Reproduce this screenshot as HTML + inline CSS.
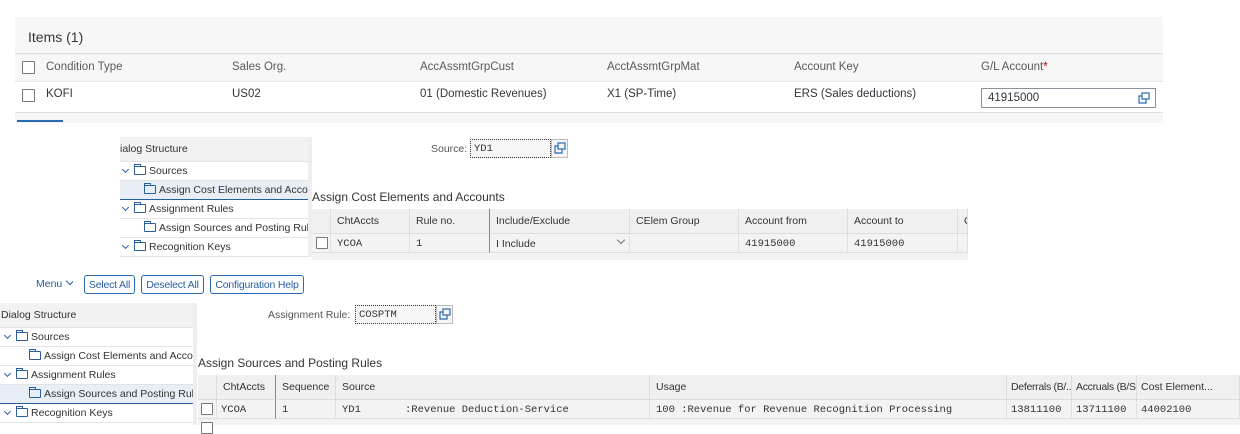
<!DOCTYPE html>
<html><head><meta charset="utf-8"><style>
*{box-sizing:border-box;margin:0;padding:0}
body{width:1240px;height:425px;background:#fff;position:relative;overflow:hidden;font-family:"Liberation Sans",sans-serif;color:#32363a}
.a{position:absolute;white-space:nowrap;overflow:hidden}
.t{font-size:10.5px;color:#333}
.m{font-family:"Liberation Mono",monospace;font-size:10.5px;color:#333}
.cb{position:absolute;width:12px;height:12px;border:1px solid #777;background:#fff;border-radius:1px}
.th{position:absolute;background:#f0f0f0;border-right:1px solid #ddd;border-bottom:1px solid #ddd;font-size:10.5px;color:#333;padding:6px 0 0 6px;white-space:nowrap;overflow:hidden}
.td{position:absolute;background:#f3f3f3;border-right:1px solid #e0e0e0;border-bottom:1px solid #ddd;font-size:10.5px;color:#333;padding:4px 0 0 6px;white-space:nowrap;overflow:hidden}
.ds{position:absolute;border-bottom:1px solid #e3e3e3;font-size:10.5px;color:#333;white-space:nowrap;overflow:hidden;background:#fff}
.fold{display:inline-block;width:12px;height:9px;border:1px solid #2a5d9f;border-radius:1px;vertical-align:-1px;margin-right:3px;position:relative}
.fold:before{content:"";position:absolute;left:-1px;top:-3px;width:5px;height:2px;border:1px solid #2a5d9f;border-bottom:none}
.chev{display:inline-block;width:5px;height:5px;border-right:1.3px solid #2a5d9f;border-bottom:1.3px solid #2a5d9f;transform:rotate(45deg);margin:0 6px 2px 3px}
.btn{position:absolute;border:1px solid #2a6ab0;border-radius:3px;font-size:10.5px;letter-spacing:-0.2px;color:#2a5d9f;background:#fff;padding:3px 0 0 0;height:19px;white-space:nowrap;text-align:center;overflow:hidden}
.vh{position:absolute;width:14px;height:12px}
</style></head><body>

<div class="a" style="left:15px;top:17px;width:1148px;height:106px;background:#f7f7f7"></div>
<div class="a" style="left:28px;top:29px;font-size:14px;color:#32363a">Items (1)</div>
<div class="a" style="left:15px;top:53px;width:1148px;height:1px;background:#e0e0e0"></div>
<div class="a" style="left:15px;top:81px;width:1148px;height:32px;background:#fff;border-top:1px solid #e5e5e5;border-bottom:1px solid #e0e0e0"></div>
<div class="cb" style="left:22px;top:61px;width:13px;height:13px"></div>
<div class="cb" style="left:22px;top:89px;width:13px;height:13px"></div>
<div class="a" style="left:46px;top:61px;font-size:11.5px;color:#5a5a5a">Condition Type</div>
<div class="a" style="left:232px;top:61px;font-size:11.5px;color:#5a5a5a">Sales Org.</div>
<div class="a" style="left:420px;top:61px;font-size:11.5px;color:#5a5a5a">AccAssmtGrpCust</div>
<div class="a" style="left:607px;top:61px;font-size:11.5px;color:#5a5a5a">AcctAssmtGrpMat</div>
<div class="a" style="left:794px;top:61px;font-size:11.5px;color:#5a5a5a">Account Key</div>
<div class="a" style="left:981px;top:61px;font-size:11.5px;color:#5a5a5a">G/L Account<span style="color:#b00">*</span></div>
<div class="a" style="left:46px;top:88px;font-size:11.5px">KOFI</div>
<div class="a" style="left:232px;top:88px;font-size:11.5px">US02</div>
<div class="a" style="left:420px;top:88px;font-size:11.5px">01 (Domestic Revenues)</div>
<div class="a" style="left:607px;top:88px;font-size:11.5px">X1 (SP-Time)</div>
<div class="a" style="left:794px;top:88px;font-size:11.5px">ERS (Sales deductions)</div>
<div class="a" style="left:981px;top:88px;width:175px;height:20px;border:1px solid #89919a;background:#fff;font-size:11.5px;padding:3px 0 0 6px">41915000</div>
<svg class="vh" style="left:1137px;top:92px" viewBox="0 0 14 12"><rect x="5" y="1" width="7" height="6" fill="none" stroke="#2a6ab0" stroke-width="1.2"/><path d="M5 4H2v7h7V7" fill="none" stroke="#2a6ab0" stroke-width="1.2"/></svg>
<div class="a" style="left:17px;top:120px;width:46px;height:2px;background:#2a6ab0"></div>

<div class="ds" style="left:120px;top:137px;width:190px;height:25px;background:#f2f2f2;padding:6px 0 0 0">ialog Structure</div>
<div class="ds" style="left:120px;top:162px;width:190px;height:19px;padding:3px 0 0 0"><span class="chev"></span><span class="fold"></span>Sources</div>
<div class="ds" style="left:120px;top:181px;width:190px;height:19px;padding:3px 0 0 24px;background:#e7eef6;border-bottom:1px solid #2a5d9f"><span class="fold"></span>Assign Cost Elements and Accounts</div>
<div class="ds" style="left:120px;top:200px;width:190px;height:19px;padding:3px 0 0 0"><span class="chev"></span><span class="fold"></span>Assignment Rules</div>
<div class="ds" style="left:120px;top:219px;width:190px;height:19px;padding:3px 0 0 24px"><span class="fold"></span>Assign Sources and Posting Rules</div>
<div class="ds" style="left:120px;top:238px;width:190px;height:19px;padding:3px 0 0 0"><span class="chev"></span><span class="fold"></span>Recognition Keys</div>
<div class="a" style="left:308px;top:137px;width:4px;height:120px;background:#eee"></div>

<div class="a t" style="left:431px;top:143px;color:#555">Source:</div>
<div class="a m" style="left:470px;top:139px;width:81px;height:19px;border:1px dotted #333;background:#f6f6f6;padding:3px 0 0 3px">YD1</div>
<div class="a" style="left:551px;top:139px;width:17px;height:19px;border:1px solid #bbb;background:#f5f5f5"></div>
<svg class="vh" style="left:553px;top:142px" viewBox="0 0 14 12"><rect x="5" y="1" width="7" height="6" fill="none" stroke="#2a6ab0" stroke-width="1.2"/><path d="M5 4H2v7h7V7" fill="none" stroke="#2a6ab0" stroke-width="1.2"/></svg>

<div class="a" style="left:312px;top:190px;font-size:12px;color:#333">Assign Cost Elements and Accounts</div>
<div class="th" style="left:312px;top:209px;width:19px;height:25px"></div>
<div class="th" style="left:331px;top:209px;width:79px;height:25px">ChtAccts</div>
<div class="th" style="left:410px;top:209px;width:80px;height:25px;border-right:1px solid #888">Rule no.</div>
<div class="th" style="left:490px;top:209px;width:140px;height:25px">Include/Exclude</div>
<div class="th" style="left:630px;top:209px;width:109px;height:25px">CElem Group</div>
<div class="th" style="left:739px;top:209px;width:109px;height:25px">Account from</div>
<div class="th" style="left:848px;top:209px;width:110px;height:25px">Account to</div>
<div class="th" style="left:958px;top:209px;width:10px;height:25px">C</div>
<div class="td" style="left:312px;top:234px;width:19px;height:19px"></div><div class="cb" style="left:316px;top:237px"></div>
<div class="td m" style="left:331px;top:234px;width:79px;height:19px">YCOA</div>
<div class="td m" style="left:410px;top:234px;width:80px;height:19px;border-right:1px solid #888">1</div>
<div class="td" style="left:490px;top:234px;width:140px;height:19px">I Include<span style="position:absolute;left:128px;top:3px;width:6px;height:6px;border-right:1px solid #777;border-bottom:1px solid #777;transform:rotate(45deg)"></span></div>
<div class="td" style="left:630px;top:234px;width:109px;height:19px"></div>
<div class="td m" style="left:739px;top:234px;width:109px;height:19px">41915000</div>
<div class="td m" style="left:848px;top:234px;width:110px;height:19px">41915000</div>
<div class="td" style="left:958px;top:234px;width:10px;height:19px"></div>
<div class="a" style="left:312px;top:253px;width:656px;height:7px;background:#f3f3f3"></div>

<div class="a" style="left:36px;top:278px;font-size:10.5px;color:#2a5d9f">Menu<span style="display:inline-block;width:6px;height:6px;border-right:1px solid #2a5d9f;border-bottom:1px solid #2a5d9f;transform:rotate(45deg);margin:0 0 3px 5px"></span></div>
<div class="btn" style="left:84px;top:275px;width:51px">Select All</div>
<div class="btn" style="left:141px;top:275px;width:63px">Deselect All</div>
<div class="btn" style="left:210px;top:275px;width:94px">Configuration Help</div>

<div class="ds" style="left:0;top:303px;width:193px;height:25px;background:#f2f2f2;padding:6px 0 0 1px">Dialog Structure</div>
<div class="ds" style="left:0;top:328px;width:193px;height:19px;padding:3px 0 0 2px"><span class="chev"></span><span class="fold"></span>Sources</div>
<div class="ds" style="left:0;top:347px;width:193px;height:19px;padding:3px 0 0 29px"><span class="fold"></span>Assign Cost Elements and Accounts</div>
<div class="ds" style="left:0;top:366px;width:193px;height:19px;padding:3px 0 0 2px"><span class="chev"></span><span class="fold"></span>Assignment Rules</div>
<div class="ds" style="left:0;top:385px;width:193px;height:19px;padding:3px 0 0 29px;background:#e7eef6;border-bottom:1px solid #2a5d9f"><span class="fold"></span>Assign Sources and Posting Rules</div>
<div class="ds" style="left:0;top:404px;width:193px;height:19px;padding:3px 0 0 2px"><span class="chev"></span><span class="fold"></span>Recognition Keys</div>
<div class="a" style="left:193px;top:303px;width:4px;height:122px;background:#eee"></div>

<div class="a t" style="left:268px;top:309px;color:#555">Assignment Rule:</div>
<div class="a m" style="left:355px;top:305px;width:81px;height:19px;border:1px dotted #333;background:#f6f6f6;padding:3px 0 0 3px">COSPTM</div>
<div class="a" style="left:436px;top:305px;width:17px;height:19px;border:1px solid #bbb;background:#f5f5f5"></div>
<svg class="vh" style="left:438px;top:308px" viewBox="0 0 14 12"><rect x="5" y="1" width="7" height="6" fill="none" stroke="#2a6ab0" stroke-width="1.2"/><path d="M5 4H2v7h7V7" fill="none" stroke="#2a6ab0" stroke-width="1.2"/></svg>

<div class="a" style="left:198px;top:356px;font-size:12px;color:#333">Assign Sources and Posting Rules</div>
<div class="th" style="left:198px;top:375px;width:19px;height:25px"></div>
<div class="th" style="left:217px;top:375px;width:59px;height:25px;border-right:1px solid #888">ChtAccts</div>
<div class="th" style="left:276px;top:375px;width:60px;height:25px">Sequence</div>
<div class="th" style="left:336px;top:375px;width:314px;height:25px">Source</div>
<div class="th" style="left:650px;top:375px;width:357px;height:25px">Usage</div>
<div class="th" style="left:1007px;top:375px;width:65px;height:25px;padding-left:4px;letter-spacing:-0.3px">Deferrals (B/...</div>
<div class="th" style="left:1072px;top:375px;width:65px;height:25px;padding-left:4px;letter-spacing:-0.3px">Accruals (B/S...</div>
<div class="th" style="left:1137px;top:375px;width:103px;height:25px;padding-left:4px">Cost Element...</div>
<div class="td" style="left:198px;top:400px;width:19px;height:19px"></div><div class="cb" style="left:201px;top:403px"></div>
<div class="td m" style="left:217px;top:400px;width:59px;height:19px;border-right:1px solid #888;padding-left:4px">YCOA</div>
<div class="td m" style="left:276px;top:400px;width:60px;height:19px">1</div>
<div class="td m" style="left:336px;top:400px;width:314px;height:19px;white-space:pre">YD1       :Revenue Deduction-Service</div>
<div class="td m" style="left:650px;top:400px;width:357px;height:19px">100 :Revenue for Revenue Recognition Processing</div>
<div class="td m" style="left:1007px;top:400px;width:65px;height:19px;padding-left:4px">13811100</div>
<div class="td m" style="left:1072px;top:400px;width:65px;height:19px;padding-left:4px">13711100</div>
<div class="td m" style="left:1137px;top:400px;width:103px;height:19px;padding-left:4px">44002100</div>
<div class="a" style="left:198px;top:419px;width:1042px;height:6px;background:#f3f3f3"></div>
<div class="cb" style="left:201px;top:422px"></div>
</body></html>
